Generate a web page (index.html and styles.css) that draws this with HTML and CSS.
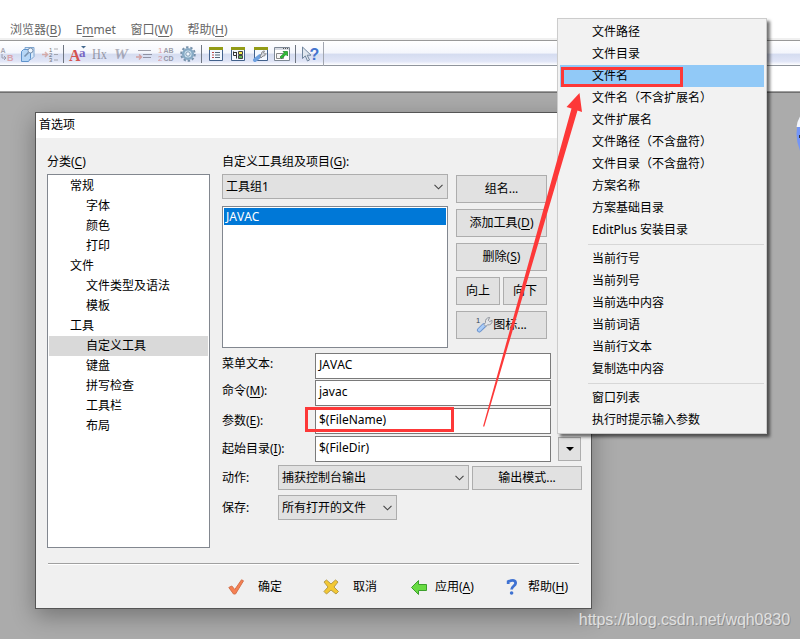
FILE: index.html
```html
<!DOCTYPE html>
<html lang="zh-CN">
<head>
    <meta charset="UTF-8">
    <meta name="viewport" content="width=device-width, initial-scale=1.0">
    <title>EditPlus - 首选项</title>
    <link rel="stylesheet" href="styles.css">
</head>
<body>
    <div class="menubar">
        <span>浏览器(<u>B</u>)</span>
        <span>E<u>m</u>met</span>
        <span>窗口(<u>W</u>)</span>
        <span>帮助(<u>H</u>)</span>
    </div>
    <div class="toolbar">
        <svg class="faded" viewBox="0 0 16 16"><text x="2.500" y="7" class="t-sans" font-size="7" fill="#667">A</text><text x="9" y="15" class="t-sans" font-size="9" fill="#d87070">B</text><path d="M4 8v4h4M6 10l2 2-2 2" fill="none" stroke="#667"/></svg>
        <svg viewBox="0 0 16 16"><path d="M5 1.500h9v9l-3 3H5z" fill="#d7e9fb" stroke="#7fa5cf"/><path d="M1.500 5.500l2-2h7v9l-2 3h-7z" fill="#b5d6f6" stroke="#5f93cb"/><circle cx="10.500" cy="4.500" r="2.500" fill="#eef6ff" stroke="#7790ad"/><path d="M8.500 6.500L4.500 10.500" stroke="#7790ad" stroke-width="1.600"/></svg>
        <svg class="faded" viewBox="0 0 16 16"><path d="M0 8.500h5M3 6l2.500 2.500L3 11" fill="none" stroke="#d08070" stroke-width="1.500"/><path d="M12 3h4M12 8.500h4M12 14h4" stroke="#777"/><text x="7" y="5.500" class="t-plain" font-size="6">1</text><text x="7" y="10.500" class="t-plain" font-size="6">2</text><text x="7" y="15.500" class="t-plain" font-size="6">3</text></svg>
        <i class="sep"></i>
        <svg viewBox="0 0 16 16"><text x="-1" y="15" class="t-serif" font-size="16" fill="#d4534f">A</text><text x="9" y="11" class="t-serif" font-size="13" fill="#7767c4">a</text><path d="M11 0h5l-2.500 2.500z" fill="#456a8f"/></svg>
        <svg class="faded" viewBox="0 0 16 16"><text x="0" y="13" class="t-serif t-light" font-size="14" textLength="15" lengthAdjust="spacingAndGlyphs" fill="#556">Hx</text></svg>
        <svg class="faded" viewBox="0 0 16 16"><text x="0" y="13" class="t-serif t-italic" font-size="14" textLength="14" lengthAdjust="spacingAndGlyphs" fill="#778">W</text></svg>
        <svg class="faded" viewBox="0 0 16 16"><path d="M2 4.500h13M7 8.500h9M7 11.500h8" stroke="#556" stroke-width="1.200"/><path d="M0 11h5M3 8.500L5.500 11 3 13.500" fill="none" stroke="#cf6e60" stroke-width="1.400"/></svg>
        <svg class="faded" viewBox="0 0 16 16"><text x="0" y="7" class="t-plain" font-size="8" fill="#c55">1</text><text x="5.500" y="7" class="t-sans" font-size="7" textLength="10" fill="#556">AB</text><text x="0" y="15" class="t-plain" font-size="8" fill="#c55">2</text><text x="5.500" y="15" class="t-sans" font-size="7" textLength="10" fill="#556">CD</text></svg>
        <svg viewBox="0 0 16 16"><circle cx="8" cy="8" r="6.800" fill="none" stroke="#7690a9" stroke-width="2" stroke-dasharray="2.400 1.870"/><circle cx="8" cy="8" r="4.800" fill="#d6e9f5" stroke="#86a9c4" stroke-width="2.600"/><circle cx="8" cy="8" r="2.200" fill="#f0f5fc" stroke="#7b99b3"/></svg>
        <i class="sep"></i>
        <svg viewBox="0 0 16 16"><path d="M1.500 2.500h13v12h-13z" fill="#f4f8ff" stroke="#42618b"/><path d="M1 1h14v3H1z" fill="#929b16"/><path d="M4 6.500h2M4 9h2M4 11.500h2" stroke="#b74848"/><path d="M7 6.500h5M7 9h5M7 11.500h5" stroke="#567"/></svg>
        <svg viewBox="0 0 16 16"><path d="M1.500 2.500h13v12h-13z" fill="#f4f8ff" stroke="#42618b"/><path d="M1 1h14v3H1z" fill="#929b16"/><path d="M3.500 5.500v4H7M3.500 6.500H7M6.500 6v6.500" fill="none" stroke="#333"/><path d="M8.500 5.500h4v3h-4z" fill="#f4e84c" stroke="#444"/><path d="M8.500 9.500h4v3h-4z" fill="#62b755" stroke="#444"/></svg>
        <svg viewBox="0 0 16 16"><path d="M2.500 2.500h13v12h-13z" fill="#f4f8ff" stroke="#42618b"/><path d="M2 1h14v3H2z" fill="#929b16"/><path d="M3 14l5-4" stroke="#6da0df" stroke-width="4" stroke-linecap="round"/><path d="M8 10l1.500-2a2.800 2.800 0 0 1 3-3l-1 2 1.500 1.300 1-1a2.600 2.600 0 0 1-3 2.700L9 12z" fill="#d5d8df" stroke="#888"/></svg>
        <svg viewBox="0 0 16 16"><path d="M.5 1.500h15v13H.5z" fill="#fff" stroke="#7d8794"/><path d="M1 2h14v2H1z" fill="#d7dbe2"/><path d="M9 2.500h1M11 2.500h1M13 2.500h1" stroke="#555"/><path d="M2.500 7.500h7v5h-7z" fill="#f5f5f5" stroke="#888"/><path d="M13.500 5.500H9l1.500 1.500L6 11l1.500 1.500L12 8.500l1.500 1.500z" fill="#2fbe35" stroke="#16851c" stroke-width=".7"/></svg>
        <i class="sep"></i>
        <svg class="wide" viewBox="0 0 18 16"><path d="M.5 1v11.500l2.800-2.600L5.500 15l2-1-2.300-4.800H9z" fill="#e1e7ef" stroke="#70859c"/><text x="7.500" y="13.500" class="t-sans" font-size="16" fill="#4574cf">?</text></svg>
        <i class="sep last"></i>
    </div>
    <div class="tabstrip"></div>
    <div class="workspace"></div>

    <svg class="ball" viewBox="0 0 4 38"><path d="M5 0Q-4 19 5 38z" fill="#7395f7"/><path d="M5 0Q1 6 .6 12H5z" fill="#f4f6fc"/><path d="M3 20h2v3H3z" fill="#333"/></svg>

    <div class="dialog">
        <div class="title">首选项</div>
        <div class="content">
            <div class="category">
                <div class="caption">分类(<u>C</u>)</div>
                <div class="tree">
                    <div>常规</div>
                    <div class="child">字体</div>
                    <div class="child">颜色</div>
                    <div class="child">打印</div>
                    <div>文件</div>
                    <div class="child">文件类型及语法</div>
                    <div class="child">模板</div>
                    <div>工具</div>
                    <div class="child current">自定义工具</div>
                    <div class="child">键盘</div>
                    <div class="child">拼写检查</div>
                    <div class="child">工具栏</div>
                    <div class="child">布局</div>
                </div>
            </div>
            <div class="settings">
                <div class="caption">自定义工具组及项目(<u>G</u>):</div>
                <div class="group">
                    <div class="group-list">
                        <div class="combo">工具组1<svg class="chevron" viewBox="0 0 9 6"><path d="M.5 .8l4 4 4-4"/></svg></div>
                        <div class="listbox"><div class="item">JAVAC</div></div>
                    </div>
                    <div class="group-buttons">
                        <div class="button">组名...</div>
                        <div class="button">添加工具(<u>D</u>)</div>
                        <div class="button">删除(<u>S</u>)</div>
                        <div class="pair">
                            <div class="button">向上</div>
                            <div class="button">向下</div>
                        </div>
                        <div class="button"><svg class="wrench" viewBox="0 0 18 18"><text x="0" y="7" class="t-plain" font-size="8" fill="#345">1</text><path d="M3.500 14.500l5-5" stroke="#6f96cf" stroke-width="5" stroke-linecap="round"/><path d="M3.500 14.200l5-5" stroke="#a9ccf8" stroke-width="3" stroke-linecap="round"/><path d="M8.500 8.500l1.500-2q-.5-5 4.500-5.500l-1.500 3 1.500 1.500 2.500-1.500q.5 5-5 5l-1.500 1.500z" fill="#e3e5e8" stroke="#8c929b"/></svg>图标...</div>
                    </div>
                </div>
                <div class="form">
                    <div class="row"><label>菜单文本:</label><div class="input">JAVAC</div></div>
                    <div class="row"><label>命令(<u>M</u>):</label><div class="input">javac</div></div>
                    <div class="row arg"><label>参数(<u>E</u>):</label><div class="input">$(FileName)</div></div>
                    <div class="row dir"><label>起始目录(<u>I</u>):</label><div class="input">$(FileDir)</div><div class="button drop"><svg viewBox="0 0 8 4"><path d="M0 0h8L4 4z"/></svg></div></div>
                </div>
                <div class="option">
                    <label>动作:</label>
                    <div class="combo action">捕获控制台输出<svg class="chevron" viewBox="0 0 9 6"><path d="M.5 .8l4 4 4-4"/></svg></div>
                    <div class="button mode">输出模式...</div>
                </div>
                <div class="option">
                    <label>保存:</label>
                    <div class="combo save">所有打开的文件<svg class="chevron" viewBox="0 0 9 6"><path d="M.5 .8l4 4 4-4"/></svg></div>
                </div>
            </div>
        </div>
        <div class="footer">
            <div class="ok"><svg viewBox="0 0 16 16"><path d="M.8 8.500l3-1.500 3 3.500L13.500.8l2 1L7.500 15H5.500z" fill="#f58052" stroke="#d4714c" stroke-linejoin="round"/></svg>确定</div>
            <div class="cancel"><svg viewBox="0 0 16 16"><path d="M1 3l2.500-2L8 5l4.500-4L15 3l-4 5 4.500 4.500L13 15l-5-4-4.500 4L1 12.500 5 8z" fill="#f3c834" stroke="#b59b48" stroke-linejoin="round"/></svg>取消</div>
            <div class="apply"><svg viewBox="0 0 16 16"><path d="M.5 8.500L7.500 1.500V5.500h8v6h-8v4z" fill="#68db42" stroke="#3c9f2c" stroke-linejoin="round"/></svg>应用(<u>A</u>)</div>
            <div class="help"><svg viewBox="0 0 12 16"><path d="M2.200 5V2.600Q9.800-.4 9.600 4.300C9.500 7 5.600 7.200 5.600 10.600" fill="none" stroke="#3f72d2" stroke-width="2.800"/><circle cx="5.600" cy="14" r="1.800" fill="#3f72d2"/></svg>帮助(<u>H</u>)</div>
        </div>
    </div>

    <div class="popup">
        <div>文件路径</div>
        <div>文件目录</div>
        <div class="hover">文件名</div>
        <div>文件名（不含扩展名）</div>
        <div>文件扩展名</div>
        <div>文件路径（不含盘符）</div>
        <div>文件目录（不含盘符）</div>
        <div>方案名称</div>
        <div>方案基础目录</div>
        <div>EditPlus 安装目录</div>
        <hr>
        <div>当前行号</div>
        <div>当前列号</div>
        <div>当前选中内容</div>
        <div>当前词语</div>
        <div>当前行文本</div>
        <div>复制选中内容</div>
        <hr>
        <div>窗口列表</div>
        <div>执行时提示输入参数</div>
    </div>

    <!-- red marks over the windows -->
    <svg class="marks" viewBox="0 0 800 639">
        <rect x="306.500" y="408.500" width="146" height="22"/>
        <rect x="562.500" y="68.500" width="119" height="17"/>
        <path d="M483 426.500L571.500 108.500 566.500 107 579.500 93 582 112 577.500 110.500 484.300 426.500z"/>
    </svg>
    <div class="watermark">https://blog.csdn.net/wqh0830</div>
</body>
</html>
```
FILE: styles.css
```css
*{
    box-sizing: border-box;
}
body{
    margin: 0;
    width: 800px;
    height: 639px;
    overflow: hidden;
    position: relative;
    display: flex;
    flex-direction: column;
    background: #ababab;
    color: #000;
    font: 12px/20px "Noto Sans", "Noto Sans CJK SC", sans-serif;
    font-kerning: none;
}
svg{
    display: block;
    flex: none;
}
u{
    text-underline-offset: 2px;
}
.menubar{
    height: 40px;
    padding: 20px 0 0 10px;
    display: flex;
    gap: 14.6px;
    background: #fff;
    border-bottom: 2px solid #f0f0f0;
    color: #666;
}
.toolbar{
    height: 26px;
    display: flex;
    align-items: center;
    padding-top: 1px;
    border-top: 1px solid #999;
    border-bottom: 1px solid #8f949c;
    background: linear-gradient(#fff 0, #f4f6fc 50%, #d5dcf0 55%, #e1e6f7 85%, #fff 100%);
}
.toolbar svg{
    width: 16px;
    height: 16px;
    margin: 0 3px;
    overflow: visible;
}
.toolbar svg:first-child{
    margin-left: -2px;
}
.toolbar .wide{
    width: 18px;
}
.faded{
    opacity: .55;
}
.sep{
    width: 1px;
    height: 18px;
    margin: 0 3px 0 2px;
    background: #6f7681;
}
.sep.last{
    height: 24px;
    margin-left: 0;
    background: #a2a6b0;
}
.t-sans{
    font-family: "Liberation Sans", sans-serif;
    font-weight: bold;
}
.t-plain{
    font-family: "Liberation Sans", sans-serif;
}
.t-serif{
    font-family: "Liberation Serif", serif;
    font-weight: bold;
}
.t-light{
    font-weight: normal;
}
.t-italic{
    font-style: italic;
}
.tabstrip{
    height: 25px;
    background: #fff;
}
.workspace{
    flex: 1;
    border-top: 1px solid #a0a0a0;
    box-shadow: inset 0 1px #707070;
}
.ball{
    position: absolute;
    left: 796px;
    top: 115px;
    width: 4px;
    height: 38px;
}

/* preferences dialog */
.dialog{
    position: absolute;
    left: 35px;
    top: 112px;
    width: 557px;
    height: 497px;
    border: 1px solid #555;
    background: #f0f0f0;
    box-shadow: 0 7px 22px rgba(0,0,0,.32);
}
.title{
    height: 25px;
    padding-left: 3px;
    line-height: 23px;
    background: #fff;
}
.content{
    display: flex;
    gap: 12px;
    height: 425px;
    padding: 13px 9px 0 11px;
}
.category{
    width: 163px;
}
.caption{
    height: 23px;
    line-height: 22px;
}
.tree{
    height: 374px;
    padding: 1px;
    border: 1px solid #82878f;
    background: #fff;
}
.tree div{
    height: 20px;
    padding-left: 21px;
}
.tree .child{
    padding-left: 37px;
}
.tree .current{
    background: #d9d9d9;
}
.settings{
    width: 360px;
}
.group{
    display: flex;
    gap: 8px;
    height: 179px;
}
.group-list{
    width: 226px;
}
.combo{
    display: flex;
    align-items: center;
    justify-content: space-between;
    height: 25px;
    padding: 0 4px 0 3px;
    border: 1px solid #adadad;
    background: #e1e1e1;
}
.chevron{
    width: 9px;
    height: 6px;
    fill: none;
    stroke: #444;
    stroke-width: 1.1;
}
.listbox{
    height: 142px;
    margin-top: 7px;
    padding: 1px;
    border: 1px solid #82878f;
    background: #fff;
}
.listbox .item{
    height: 17px;
    padding-left: 2px;
    line-height: 17px;
    background: #0078d7;
    color: #fff;
}
.group-buttons{
    display: flex;
    flex-direction: column;
    gap: 6px;
    width: 91px;
    padding-top: 1px;
}
.button{
    display: flex;
    align-items: center;
    justify-content: center;
    height: 28px;
    border: 1px solid #adadad;
    background: #e1e1e1;
    white-space: pre;
}
.pair{
    display: flex;
    gap: 3px;
}
.pair .button{
    flex: 1;
}
.wrench{
    width: 17px;
    height: 18px;
}
.row{
    display: flex;
    height: 27px;
}
.row label{
    width: 93px;
    padding-top: 1px;
}
.arg, .dir{
    padding-top: 1px;
    height: 28px;
}
.arg label, .dir label{
    padding-top: 3px;
}
.input{
    width: 236px;
    height: 26px;
    padding-left: 3px;
    line-height: 22px;
    border: 1px solid #7a7a7a;
    background: #fff;
}
.drop{
    width: 23px;
    height: 24px;
    margin: 1px 0 0 7px;
}
.drop svg{
    width: 8px;
    height: 4px;
}
.option{
    display: flex;
    align-items: center;
    height: 25px;
    margin-top: 5px;
}
.form + .option{
    margin-top: 2px;
}
.option label{
    width: 56px;
}
.action{
    width: 191px;
}
.save{
    width: 119px;
}
.mode{
    width: 110px;
    height: 24px;
    margin: 1px 0 0 3px;
}
.footer{
    display: flex;
    align-items: center;
    height: 45px;
    margin: 0 12px;
    padding-left: 180px;
    border-top: 1px solid #a0a0a0;
    box-shadow: inset 0 1px #fff;
}
.footer div{
    display: flex;
    align-items: center;
    height: 20px;
    padding-top: 1px;
    white-space: pre;
}
.footer svg{
    width: 16px;
    height: 16px;
    margin-right: 14px;
}
.footer .ok{
    width: 95px;
}
.footer .cancel{
    width: 88px;
}
.footer .apply{
    width: 95px;
}
.footer .apply svg{
    margin-right: 8px;
}
.footer .help svg{
    width: 12px;
    margin-right: 10px;
}

/* argument menu */
.popup{
    position: absolute;
    left: 557px;
    top: 18px;
    width: 210px;
    height: 416px;
    padding: 2px;
    border: 1px solid #ccc;
    background: #f2f2f2;
    box-shadow: 3px 3px 3px rgba(0,0,0,.55);
}
.popup div{
    height: 22px;
    padding-left: 32px;
    line-height: 21px;
    white-space: nowrap;
}
.popup .hover{
    background: #91c9f7;
}
.popup hr{
    height: 1px;
    margin: 3px 0 3px 28px;
    border: 0;
    background: #d7d7d7;
}
.marks{
    position: absolute;
    left: 0;
    top: 0;
    width: 800px;
    height: 639px;
    fill: #fd3838;
}
.marks rect{
    fill: none;
    stroke: #fd3838;
    stroke-width: 3;
}
.watermark{
    position: absolute;
    right: 10px;
    bottom: 9px;
    font: 16px/20px "Liberation Sans", sans-serif;
    letter-spacing: -.05px;
    color: #e0e0e0;
    text-shadow: 1px 1px #8b8b8b;
}
```
